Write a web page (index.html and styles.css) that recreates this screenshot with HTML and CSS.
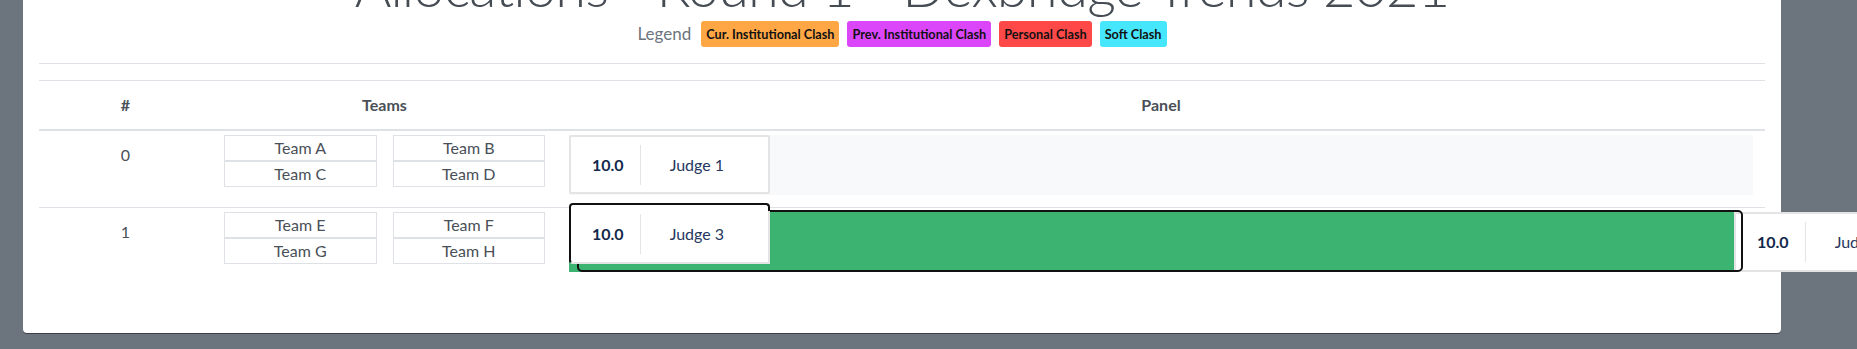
FILE: index.html
```html
<!DOCTYPE html>
<html>
<head>
<meta charset="utf-8">
<link rel="stylesheet" href="styles.css">
</head>
<body>
<div class="card">
  <div class="card-body">
    <h1 class="title">Allocations - Round 1 - Dexbridge Trends 2021</h1>
    <div class="legend">
      <span class="legend-label">Legend</span>
      <span class="badge b-cur">Cur. Institutional Clash</span>
      <span class="badge b-prev">Prev. Institutional Clash</span>
      <span class="badge b-personal">Personal Clash</span>
      <span class="badge b-soft">Soft Clash</span>
    </div>
    <hr class="divider">
    <table class="alloc">
      <colgroup>
        <col class="c-num">
        <col class="c-teams">
        <col class="c-panel">
      </colgroup>
      <thead>
        <tr><th>#</th><th>Teams</th><th>Panel</th></tr>
      </thead>
      <tbody>
        <tr>
          <td class="num">0</td>
          <td class="teams-cell">
            <div class="teams">
              <div class="team">Team A</div>
              <div class="team">Team B</div>
              <div class="team">Team C</div>
              <div class="team">Team D</div>
            </div>
          </td>
          <td class="panel-cell">
            <div class="panel">
              <div class="judge">
                <span class="score">10.0</span>
                <span class="sep"></span>
                <span class="name">Judge 1</span>
              </div>
            </div>
          </td>
        </tr>
        <tr>
          <td class="num">1</td>
          <td class="teams-cell">
            <div class="teams">
              <div class="team">Team E</div>
              <div class="team">Team F</div>
              <div class="team">Team G</div>
              <div class="team">Team H</div>
            </div>
          </td>
          <td class="panel-cell">
            <div class="panel panel-active">
              <div class="drop-zone"></div>
              <div class="judge judge-full">
                <span class="score">10.0</span>
                <span class="sep"></span>
                <span class="name">Judge 2</span>
              </div>
              <div class="drag-outline"></div>
              <div class="judge judge-dragging">
                <span class="score">10.0</span>
                <span class="sep"></span>
                <span class="name">Judge 3</span>
              </div>
            </div>
          </td>
        </tr>
      </tbody>
    </table>
  </div>
</div>
</body>
</html>
```

FILE: styles.css
```css
html, body {
  margin: 0;
  height: 100%;
  overflow: hidden;
}
body {
  background: #6c757d;
  font-family: Lato, "Open Sans", "DejaVu Sans", sans-serif;
  font-size: 16px;
  line-height: 1.5;
  color: #495057;
}
.card {
  margin-top: -48px;
  margin-left: 23px;
  width: 1758px;
  background: #fff;
  border-radius: 4px;
  box-shadow: 0 1px 0 rgba(0, 0, 0, 0.45);
}
.card-body {
  padding: 0 16px 49px;
}
.title {
  margin: 0 0 2px;
  font-size: 56px;
  font-weight: 300;
  line-height: 67px;
  letter-spacing: -0.9px;
  text-align: center;
  color: #454c53;
  white-space: nowrap;
}
.legend {
  display: flex;
  justify-content: center;
  align-items: center;
  gap: 8px;
  height: 26px;
}
.legend-label {
  margin-right: 2px;
  font-size: 17px;
  color: #6c757d;
}
.badge {
  font-size: 12.7px;
  font-weight: 700;
  line-height: 12px;
  padding: 7px 5px;
  border-radius: 3px;
  color: #111;
}
.b-cur { background: #ffa745; }
.b-prev { background: #dc46fa; }
.b-personal { background: #ff4848; }
.b-soft { background: #46e6fc; }
.divider {
  margin: 16px 0;
  border: 0;
  border-top: 1px solid #dee2e6;
  height: 0;
}
.alloc {
  width: 100%;
  table-layout: fixed;
  border-collapse: separate;
  border-spacing: 0;
}
.c-num { width: 173px; }
.c-teams { width: 345px; }
.alloc th {
  padding: 12px;
  border-top: 1px solid #dee2e6;
  border-bottom: 2px solid #dee2e6;
  font-weight: 700;
  color: #495057;
  text-align: center;
}
.alloc td {
  padding: 4px 12px 12px;
  vertical-align: top;
}
.alloc tbody tr + tr td {
  border-top: 1px solid #dee2e6;
}
.alloc td.num {
  padding-top: 12px;
  text-align: center;
  color: #495057;
}
.teams {
  display: grid;
  grid-template-columns: 1fr 1fr;
  column-gap: 16px;
}
.team {
  border: 1px solid #dee2e6;
  line-height: 24px;
  text-align: center;
  color: #495057;
}
.panel {
  position: relative;
  display: flex;
  height: 60px;
  background: #f8f9fa;
}
.panel-active {
  background: transparent;
}
.judge {
  flex: 0 0 201px;
  box-sizing: border-box;
  height: 59px;
  display: flex;
  align-items: center;
  background: #fff;
  border: 2px solid #e4e4e4;
  border-radius: 2px;
  white-space: nowrap;
}
.judge-full {
  height: 60px;
}
.score {
  padding: 0 16px 0 21px;
  font-weight: 700;
  color: #13294b;
}
.sep {
  width: 1px;
  height: 40px;
  background: #e2e5e8;
}
.name {
  padding-left: 29px;
  color: #26375e;
}
.drop-zone {
  flex: 0 0 1165px;
  height: 60px;
  background: #3cb371;
}
.drag-outline {
  position: absolute;
  left: 8px;
  top: -2px;
  width: 1166px;
  height: 62px;
  box-sizing: border-box;
  border: 2.5px solid #111;
  border-radius: 5px;
}
.judge-dragging {
  position: absolute;
  left: 0;
  top: -9px;
  width: 201px;
  height: 61px;
  border-color: #111 #111 #e4e4e4 #111;
  border-width: 2px;
  border-radius: 4px 4px 0 4px;
}
.judge-dragging::after {
  content: "";
  position: absolute;
  right: -2px;
  top: 6px;
  bottom: -2px;
  width: 2px;
  background: #e4e4e4;
}
```
